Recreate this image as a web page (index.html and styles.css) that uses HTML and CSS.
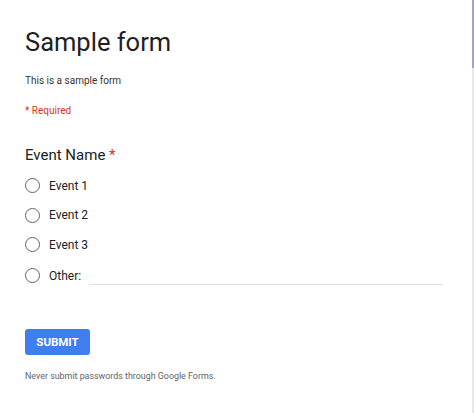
FILE: index.html
```html
<!DOCTYPE html>
<html>
<head>
<meta charset="utf-8">
<link rel="stylesheet" href="styles.css">
</head>
<body>
<div class="page">
  <main class="form">
    <h1 class="title">Sample form</h1>
    <p class="desc">This is a sample form</p>
    <p class="required">* Required</p>
    <section class="question">
      <h2 class="qtitle">Event Name <span class="star">*</span></h2>
      <div class="options">
        <label class="option"><span class="radio"></span><span class="label">Event 1</span></label>
        <label class="option"><span class="radio"></span><span class="label">Event 2</span></label>
        <label class="option"><span class="radio"></span><span class="label">Event 3</span></label>
        <label class="option other"><span class="radio"></span><span class="label">Other:</span><span class="other-input"></span></label>
      </div>
    </section>
    <button class="submit">SUBMIT</button>
    <p class="note">Never submit passwords through Google Forms.</p>
  </main>
  <div class="scrollbar"><div class="thumb"></div></div>
</div>
</body>
</html>
```
FILE: styles.css
```css
* { box-sizing: border-box; }
html, body { margin: 0; padding: 0; background: #fff; }
body { font-family: Roboto, "Noto Sans", Arial, sans-serif; color: #202124; }
.page { display: flex; width: 474px; height: 413px; overflow: hidden; }
.form { flex: 1; padding: 26px 0 0 25px; }
.title { margin: 0; font-size: 25.5px; font-weight: 400; line-height: 32px; color: #1f1f1f; }
.desc { margin: 15px 0 0; font-size: 10px; line-height: 16px; color: #333; }
.required { margin: 14px 0 0; font-size: 10px; line-height: 16px; color: #d93025; }
.question { margin-top: 26px; }
.qtitle { margin: 0; font-size: 15px; font-weight: 400; line-height: 20px; color: #202124; }
.star { color: #d93025; }
.options { display: flex; flex-direction: column; margin-top: 6px; }
.option { display: flex; align-items: center; height: 29.5px; }
.radio { width: 15px; height: 15px; border: 1.6px solid #5f6368; border-radius: 50%; flex: none; }
.label { margin-left: 9px; font-size: 12px; color: #202124; }
.other-input { flex: none; width: 354px; height: 1px; background: #e0e0e0; margin-left: 8px; align-self: flex-end; margin-bottom: 7px; }
.option.other { height: 32px; }
.submit { display: block; margin-top: 37px; width: 65px; height: 26px; border: none; border-radius: 3px; background: #3f7ef0; color: #fff; font-family: Roboto, Arial, sans-serif; font-weight: 700; font-size: 11.5px; padding: 0; }
.note { margin: 16px 0 0; font-size: 8.9px; color: #5f6368; }
.scrollbar { width: 2px; flex: none; background: #e8e7ee; }
.thumb { height: 68px; background: #a9a0c9; }
```
